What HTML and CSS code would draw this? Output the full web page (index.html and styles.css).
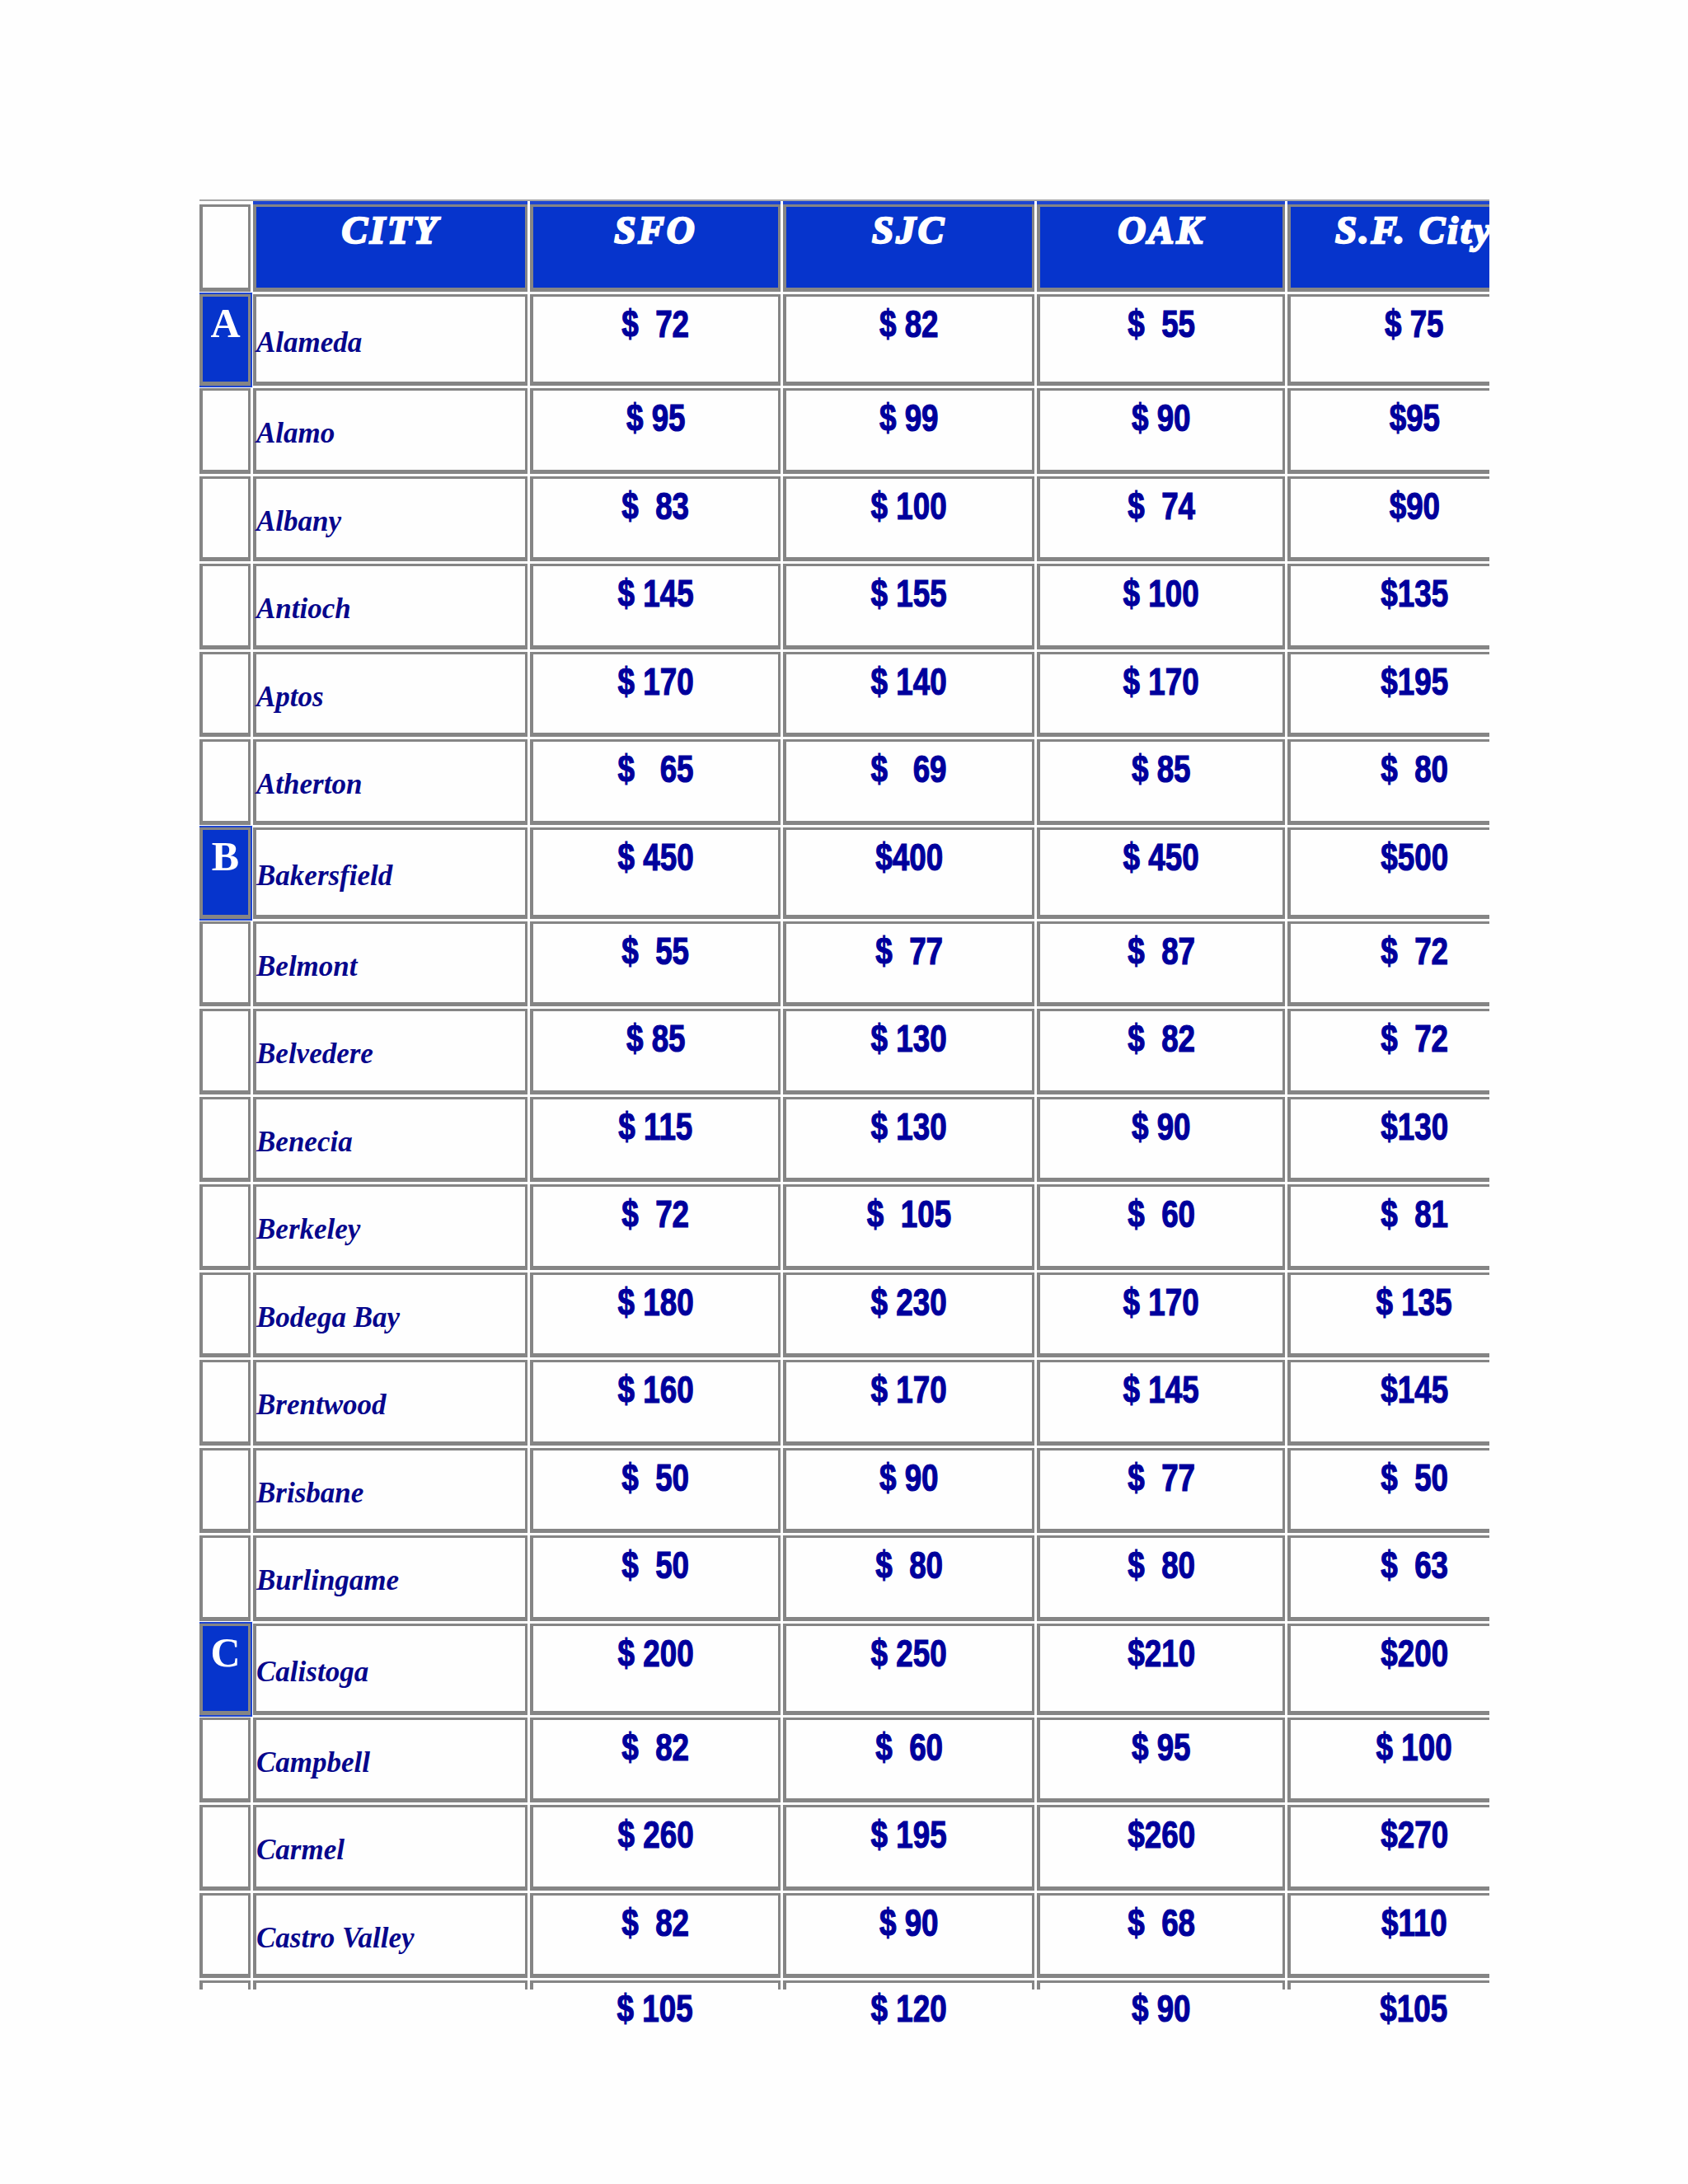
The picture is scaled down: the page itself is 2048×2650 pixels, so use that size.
FILE: index.html
```html
<!DOCTYPE html>
<html>
<head>
<meta charset="utf-8">
<title>Rates</title>
<link rel="stylesheet" href="styles.css">
</head>
<body>
<div class="sheet">
  <div class="table">
    <div class="row head">
      <div class="cell blank"></div>
      <div class="cell hd"><span>CITY</span></div>
      <div class="cell hd"><span>SFO</span></div>
      <div class="cell hd"><span>SJC</span></div>
      <div class="cell hd"><span>OAK</span></div>
      <div class="cell hd"><span>S.F. City</span></div>
    </div>

    <div class="row tall">
      <div class="cell letter">A</div>
      <div class="cell city">Alameda</div>
      <div class="cell price"><span>$  72</span></div>
      <div class="cell price"><span>$ 82</span></div>
      <div class="cell price"><span>$  55</span></div>
      <div class="cell price"><span>$ 75</span></div>
    </div>
    <div class="row">
      <div class="cell blank"></div>
      <div class="cell city">Alamo</div>
      <div class="cell price"><span>$ 95</span></div>
      <div class="cell price"><span>$ 99</span></div>
      <div class="cell price"><span>$ 90</span></div>
      <div class="cell price"><span>$95</span></div>
    </div>
    <div class="row">
      <div class="cell blank"></div>
      <div class="cell city">Albany</div>
      <div class="cell price"><span>$  83</span></div>
      <div class="cell price"><span>$ 100</span></div>
      <div class="cell price"><span>$  74</span></div>
      <div class="cell price"><span>$90</span></div>
    </div>
    <div class="row">
      <div class="cell blank"></div>
      <div class="cell city">Antioch</div>
      <div class="cell price"><span>$ 145</span></div>
      <div class="cell price"><span>$ 155</span></div>
      <div class="cell price"><span>$ 100</span></div>
      <div class="cell price"><span>$135</span></div>
    </div>
    <div class="row">
      <div class="cell blank"></div>
      <div class="cell city">Aptos</div>
      <div class="cell price"><span>$ 170</span></div>
      <div class="cell price"><span>$ 140</span></div>
      <div class="cell price"><span>$ 170</span></div>
      <div class="cell price"><span>$195</span></div>
    </div>
    <div class="row">
      <div class="cell blank"></div>
      <div class="cell city">Atherton</div>
      <div class="cell price"><span>$   65</span></div>
      <div class="cell price"><span>$   69</span></div>
      <div class="cell price"><span>$ 85</span></div>
      <div class="cell price"><span>$  80</span></div>
    </div>

    <div class="row tall">
      <div class="cell letter">B</div>
      <div class="cell city">Bakersfield</div>
      <div class="cell price"><span>$ 450</span></div>
      <div class="cell price"><span>$400</span></div>
      <div class="cell price"><span>$ 450</span></div>
      <div class="cell price"><span>$500</span></div>
    </div>
    <div class="row">
      <div class="cell blank"></div>
      <div class="cell city">Belmont</div>
      <div class="cell price"><span>$  55</span></div>
      <div class="cell price"><span>$  77</span></div>
      <div class="cell price"><span>$  87</span></div>
      <div class="cell price"><span>$  72</span></div>
    </div>
    <div class="row">
      <div class="cell blank"></div>
      <div class="cell city">Belvedere</div>
      <div class="cell price"><span>$ 85</span></div>
      <div class="cell price"><span>$ 130</span></div>
      <div class="cell price"><span>$  82</span></div>
      <div class="cell price"><span>$  72</span></div>
    </div>
    <div class="row">
      <div class="cell blank"></div>
      <div class="cell city">Benecia</div>
      <div class="cell price"><span>$ 115</span></div>
      <div class="cell price"><span>$ 130</span></div>
      <div class="cell price"><span>$ 90</span></div>
      <div class="cell price"><span>$130</span></div>
    </div>
    <div class="row">
      <div class="cell blank"></div>
      <div class="cell city">Berkeley</div>
      <div class="cell price"><span>$  72</span></div>
      <div class="cell price"><span>$  105</span></div>
      <div class="cell price"><span>$  60</span></div>
      <div class="cell price"><span>$  81</span></div>
    </div>
    <div class="row">
      <div class="cell blank"></div>
      <div class="cell city">Bodega Bay</div>
      <div class="cell price"><span>$ 180</span></div>
      <div class="cell price"><span>$ 230</span></div>
      <div class="cell price"><span>$ 170</span></div>
      <div class="cell price"><span>$ 135</span></div>
    </div>
    <div class="row">
      <div class="cell blank"></div>
      <div class="cell city">Brentwood</div>
      <div class="cell price"><span>$ 160</span></div>
      <div class="cell price"><span>$ 170</span></div>
      <div class="cell price"><span>$ 145</span></div>
      <div class="cell price"><span>$145</span></div>
    </div>
    <div class="row">
      <div class="cell blank"></div>
      <div class="cell city">Brisbane</div>
      <div class="cell price"><span>$  50</span></div>
      <div class="cell price"><span>$ 90</span></div>
      <div class="cell price"><span>$  77</span></div>
      <div class="cell price"><span>$  50</span></div>
    </div>
    <div class="row">
      <div class="cell blank"></div>
      <div class="cell city">Burlingame</div>
      <div class="cell price"><span>$  50</span></div>
      <div class="cell price"><span>$  80</span></div>
      <div class="cell price"><span>$  80</span></div>
      <div class="cell price"><span>$  63</span></div>
    </div>

    <div class="row tall">
      <div class="cell letter">C</div>
      <div class="cell city">Calistoga</div>
      <div class="cell price"><span>$ 200</span></div>
      <div class="cell price"><span>$ 250</span></div>
      <div class="cell price"><span>$210</span></div>
      <div class="cell price"><span>$200</span></div>
    </div>
    <div class="row">
      <div class="cell blank"></div>
      <div class="cell city">Campbell</div>
      <div class="cell price"><span>$  82</span></div>
      <div class="cell price"><span>$  60</span></div>
      <div class="cell price"><span>$ 95</span></div>
      <div class="cell price"><span>$ 100</span></div>
    </div>
    <div class="row">
      <div class="cell blank"></div>
      <div class="cell city">Carmel</div>
      <div class="cell price"><span>$ 260</span></div>
      <div class="cell price"><span>$ 195</span></div>
      <div class="cell price"><span>$260</span></div>
      <div class="cell price"><span>$270</span></div>
    </div>
    <div class="row">
      <div class="cell blank"></div>
      <div class="cell city">Castro Valley</div>
      <div class="cell price"><span>$  82</span></div>
      <div class="cell price"><span>$ 90</span></div>
      <div class="cell price"><span>$  68</span></div>
      <div class="cell price"><span>$110</span></div>
    </div>

    <div class="row tail">
      <div class="cell stub"></div>
      <div class="cell stub"></div>
      <div class="cell stub price"><span>$ 105</span></div>
      <div class="cell stub price"><span>$ 120</span></div>
      <div class="cell stub price"><span>$ 90</span></div>
      <div class="cell stub price"><span>$105</span></div>
    </div>
  </div>
</div>
</body>
</html>
```

FILE: styles.css
```css
html, body {
  margin: 0;
  padding: 0;
  background: #fefefe;
}

body {
  width: 2048px;
  height: 2650px;
  overflow: hidden;
  font-family: "Liberation Serif", "Times New Roman", serif;
}

.sheet {
  margin: 242px 0 0 242px;
  width: 1565px;
  overflow-x: clip;
  overflow-y: visible;
  border-top: 2px solid #a6a6a6;
  padding-top: 4px;
}

.table {
  display: flex;
  flex-direction: column;
  gap: 3px;
  width: 1627px;
}

.row {
  display: grid;
  grid-template-columns: 62px 333px 304px 305px 301px 307px;
  grid-template-rows: 100%;
  column-gap: 3px;
  height: 103.5px;
}

.row.head { height: 106px; }
.row.tall { height: 111px; }
.row.tail {
  height: 70px;
  grid-template-rows: 70px;
}

.cell {
  box-sizing: border-box;
  border-style: solid;
  border-color: #858585;
  border-width: 3px 3px 5px 4px;
  background: #fefefe;
  min-width: 0;
  min-height: 0;
}

.cell.hd {
  background: #0634cc;
  box-shadow: 0 -4px 0 0 #1d45d2;
  text-align: center;
  padding-top: 5px;
  white-space: nowrap;
  overflow: visible;
}

.cell.hd span {
  display: inline-block;
  font-family: "Liberation Serif", "Times New Roman", serif;
  font-weight: bold;
  font-style: italic;
  font-size: 47px;
  line-height: 1;
  letter-spacing: 3px;
  color: #ffffff;
  -webkit-text-stroke: 2.4px #ffffff;
}

.cell.letter {
  background: #0634cc;
  box-shadow: 0 0 0 2px #1d45d2;
  color: #ffffff;
  text-align: center;
  font-family: "Liberation Serif", "Times New Roman", serif;
  font-weight: bold;
  font-size: 50px;
  line-height: 1;
  padding-top: 7px;
}

.cell.city {
  display: flex;
  align-items: center;
  padding-top: 8px;
  font-family: "Liberation Serif", "Times New Roman", serif;
  font-weight: bold;
  font-style: italic;
  font-size: 35px;
  line-height: 1;
  color: #07078c;
  white-space: nowrap;
}

.cell.price {
  text-align: center;
  padding-top: 10px;
}

.cell.price span {
  display: inline-block;
  white-space: pre;
  font-family: "Liberation Sans", Arial, sans-serif;
  font-weight: bold;
  font-size: 46px;
  line-height: 1;
  color: #00009c;
  -webkit-text-stroke: 1.2px #00009c;
  transform: scaleX(0.8);
  transform-origin: 50% 50%;
}

.cell.stub {
  border-width: 3px 0 0 0;
  background-color: transparent;
  background-image:
    linear-gradient(#858585, #858585),
    linear-gradient(#858585, #858585);
  background-size: 4px 8px, 3px 8px;
  background-position: left top, right top;
  background-repeat: no-repeat;
}

.cell.stub.price {
  padding-top: 8px;
}
```
